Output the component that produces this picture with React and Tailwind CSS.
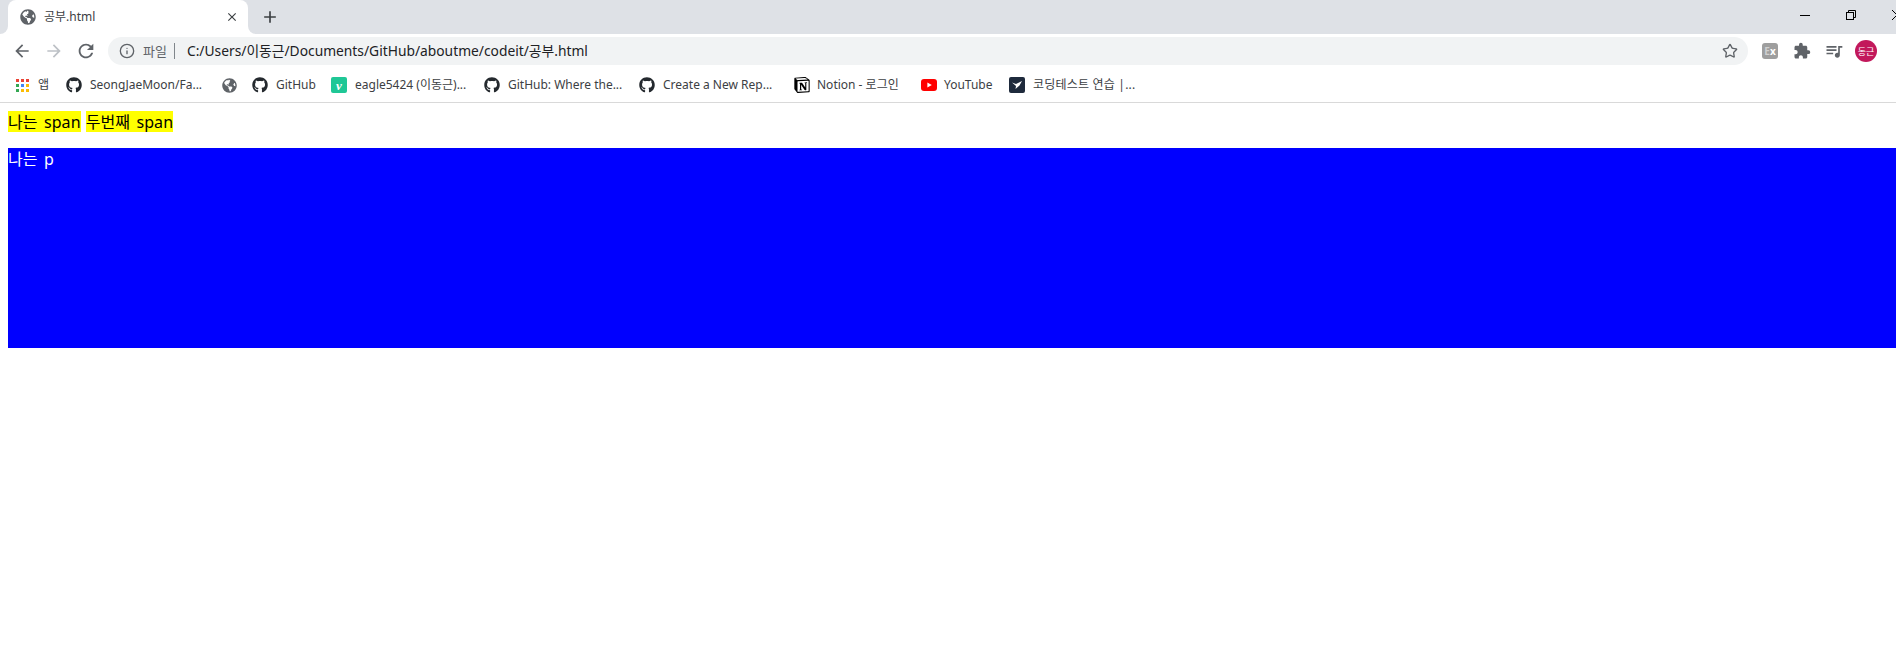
import React from 'react';
import { FaGithub, FaGlobeAmericas } from 'react-icons/fa';
import { SiNotion } from 'react-icons/si';
import { MdAdd, MdArrowBack, MdArrowForward, MdClose, MdExtension, MdQueueMusic, MdRefresh } from 'react-icons/md';
import { Info, Star } from 'lucide-react';

const uiFont = 'font-["Noto_Sans","Noto_Sans_CJK_KR",sans-serif]';

// 앱 launcher grid, 9 coloured dots
const AppsIcon = () => {
  const colors = ['#ea4335', '#ea4335', '#ea4335', '#34a853', '#4285f4', '#fbbc04', '#34a853', '#fbbc04', '#fbbc04'];
  return (
    <div className="grid grid-cols-[3px_3px_3px] gap-[2px] w-[13px] h-[13px]">
      {colors.map((c, i) => (
        <span key={i} className="w-[3px] h-[3px]" style={{ backgroundColor: c }} />
      ))}
    </div>
  );
};

const GithubIcon = () => <FaGithub className="w-4 h-4 text-[#24292e]" />;
const GlobeIcon = () => <FaGlobeAmericas className="w-[15px] h-[15px] text-[#5f6368]" />;

const VIcon = () => (
  <div className="w-4 h-4 rounded-[2px] bg-[#1fc796] flex items-center justify-center text-white text-[13px] leading-none font-bold italic font-['Liberation_Serif',serif]">
    v
  </div>
);

const NotionIcon = () => <SiNotion className="w-4 h-4 text-black" />;

const YoutubeIcon = () => (
  <svg viewBox="0 0 16 16" className="w-4 h-4">
    <rect x="0" y="2" width="16" height="12" rx="3" fill="#f00" />
    <path d="M6.4 5.4 L10.8 8 L6.4 10.6 Z" fill="#fff" />
  </svg>
);

const CodeIcon = () => (
  <svg viewBox="0 0 16 16" className="w-4 h-4">
    <rect width="16" height="16" rx="2" fill="#1e2a3c" />
    <path d="M3 5.5 L7 7 L13 4 L10.5 8.5 L6.5 12 L7 9 Z" fill="#fff" />
  </svg>
);

const bookmarks = [
  { icon: <AppsIcon />, label: '앱', box: 'w-[51px] pl-[14px]', gap: 'gap-[8px]' },
  { icon: <GithubIcon />, label: 'SeongJaeMoon/Fa...', box: 'w-[155px] pl-[15px]', gap: 'gap-2' },
  { icon: <GlobeIcon />, label: '', box: 'w-[31px] pl-[15px]', gap: '' },
  { icon: <GithubIcon />, label: 'GitHub', box: 'w-[78px] pl-[15px]', gap: 'gap-2' },
  { icon: <VIcon />, label: 'eagle5424 (이동근)...', box: 'w-[153px] pl-[16px]', gap: 'gap-2' },
  { icon: <GithubIcon />, label: 'GitHub: Where the...', box: 'w-[155px] pl-[16px]', gap: 'gap-2' },
  { icon: <GithubIcon />, label: 'Create a New Rep...', box: 'w-[155px] pl-[16px]', gap: 'gap-2' },
  { icon: <NotionIcon />, label: 'Notion - 로그인', box: 'w-[127px] pl-[16px]', gap: 'gap-[7px]' },
  { icon: <YoutubeIcon />, label: 'YouTube', box: 'w-[88px] pl-[16px]', gap: 'gap-[7px]' },
  { icon: <CodeIcon />, label: '코딩테스트 연습 |...', box: 'w-[140px] pl-[16px]', gap: 'gap-2', extra: 'tracking-[0.2px]' },
];

const TitleBar = () => (
  <div className="h-[34px] bg-[#dee1e6] flex items-end">
    <div className="relative ml-2 w-[240px] h-[34px] bg-white rounded-t-lg flex items-center pl-3 pr-[9px]">
      <div className="absolute left-[-8px] bottom-0 w-2 h-2 bg-white">
        <div className="w-2 h-2 bg-[#dee1e6] rounded-br-lg" />
      </div>
      <div className="absolute right-[-8px] bottom-0 w-2 h-2 bg-white">
        <div className="w-2 h-2 bg-[#dee1e6] rounded-bl-lg" />
      </div>
      <FaGlobeAmericas className="w-4 h-4 text-[#5f6368] mr-2" />
      <span className="text-xs text-[#3c4043]">공부.html</span>
      <MdClose className="ml-auto w-[14px] h-[14px] text-[#3c4043]" />
    </div>
    <div className="h-[34px] flex items-center ml-[12px]">
      <MdAdd className="w-5 h-5 text-[#3c4043]" />
    </div>
    <div className="ml-auto h-[34px] flex items-center w-[116px] shrink-0 overflow-hidden pb-1 pl-[20px]">
      <div className="w-[10px] h-px bg-black shrink-0" />
      <svg viewBox="0 0 10 10" className="w-[10px] h-[10px] ml-[36px] shrink-0" fill="none" stroke="#000">
        <path d="M2.5 2.5 V0.5 H9.5 V7.5 H7.5" />
        <rect x="0.5" y="2.5" width="7" height="7" />
      </svg>
      <svg viewBox="0 0 10 10" className="w-[10px] h-[10px] ml-[36px] shrink-0" fill="none" stroke="#000">
        <path d="M0 0 L10 10 M10 0 L0 10" />
      </svg>
    </div>
  </div>
);

const Toolbar = () => (
  <div className="h-[34px] bg-white flex items-center">
    <div className="w-[108px] flex items-center shrink-0 pl-3">
      <MdArrowBack className="w-5 h-5 text-[#5f6368]" />
      <MdArrowForward className="w-5 h-5 text-[#bdc1c6] ml-3" />
      <MdRefresh className="w-[22px] h-[22px] text-[#5f6368] ml-[11px]" />
    </div>
    <div className="w-[1640px] h-7 bg-[#f1f3f4] rounded-full flex items-center pl-[11px] pr-[10px] shrink-0">
      <Info className="w-4 h-4 text-[#5f6368]" strokeWidth={2} />
      <span className="ml-[8px] text-[13px] text-[#5f6368] pt-px">파일</span>
      <div className="w-px h-4 bg-[#80868b] ml-[7px]" />
      <span className="ml-3 text-[13.8px] text-[#202124] pt-px">C:/Users/이동근/Documents/GitHub/aboutme/codeit/공부.html</span>
      <Star className="ml-auto w-4 h-4 text-[#5f6368]" strokeWidth={2} />
    </div>
    <div className="flex items-center pl-[14px]">
      <div className="w-4 h-4 rounded-[3px] bg-[#9e9e9e] flex items-center justify-center text-[10px] leading-none font-bold">
        <span className="text-[#d0d0d0]">E</span>
        <span className="text-white">x</span>
      </div>
      <MdExtension className="w-[18px] h-[18px] text-[#5f6368] ml-[15px]" />
      <MdQueueMusic className="w-5 h-5 text-[#5f6368] ml-[13px]" />
      <div className="w-[22px] h-[22px] rounded-full bg-[#c2185b] ml-[11px] flex items-center justify-center text-white text-[9px] leading-none">
        동근
      </div>
    </div>
  </div>
);

const BookmarkBar = () => (
  <div className="h-[35px] bg-white border-b border-[#d9d9d9] flex items-center">
    {bookmarks.map((b, i) => (
      <div key={i} className={`flex items-center shrink-0 ${b.box} ${b.gap}`}>
        <span className="w-4 h-4 flex items-center justify-center shrink-0">{b.icon}</span>
        {b.label && <span className={`text-xs text-[#3c4043] whitespace-nowrap ${b.extra || ''}`}>{b.label}</span>}
      </div>
    ))}
  </div>
);

export default function App() {
  return (
    <div className={`h-[648px] w-[1896px] overflow-hidden bg-white ${uiFont}`}>
      <TitleBar />
      <Toolbar />
      <BookmarkBar />
      <div className="pl-2 pt-2 text-black text-base [word-spacing:2px] tracking-[0.1px]">
        <div className="flex gap-[5px] h-[21px] leading-[23px] whitespace-nowrap">
          <span className="bg-[#ffff00] h-[21px]">나는 span</span>
          <span className="bg-[#ffff00] h-[21px]">두번째 span</span>
        </div>
        <p className="mt-4 h-[200px] bg-[#0000ff] text-white leading-[23px]">나는 p</p>
      </div>
    </div>
  );
}
